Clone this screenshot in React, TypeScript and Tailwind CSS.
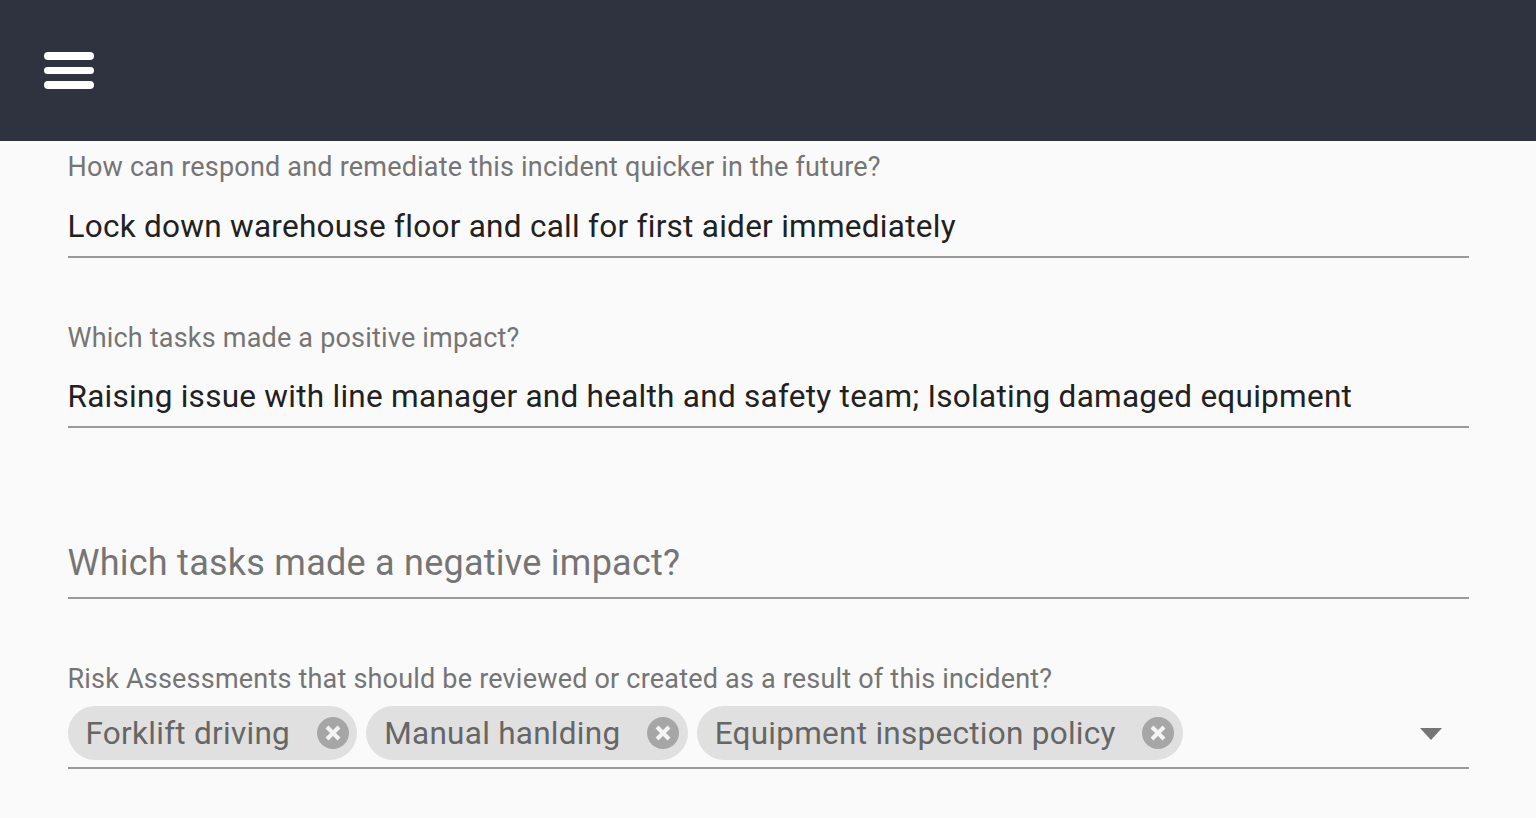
import React from "react";

function TextField({ label, value, first }: { label: string; value: string; first?: boolean }) {
  return (
    <div className={`flex flex-col justify-end border-b-2 border-[#9a9a9a] ${first ? "h-[116.5px]" : "h-[170.5px]"}`}>
      <div className="text-[27px] leading-[34px] text-[#757575] tracking-[0.2px]">{label}</div>
      <div className="pt-[12.5px] h-[71.5px] text-[31.5px] leading-[60px] text-[#212121] tracking-[0.27px]">{value}</div>
    </div>
  );
}

function Chip({ text }: { text: string }) {
  return (
    <div className="flex items-center h-[54px] rounded-full bg-[#e0e0e0] pl-[18px] pr-[8.5px]">
      <span className="text-[31.5px] leading-[54px] mt-[2px] text-[#666666] tracking-[0.27px] mr-[26.75px]">{text}</span>
      <svg viewBox="0 0 32 32" className="w-[32px] h-[32px]">
        <circle cx="16" cy="16" r="16" fill="#a6a6a6" />
        <path d="M10 10L22 22M22 10L10 22" stroke="#f4f4f4" strokeWidth="4" fill="none" />
      </svg>
    </div>
  );
}

export default function App() {
  return (
    <div className="font-['Roboto',sans-serif] w-[1536px] h-[818px] overflow-hidden bg-[#fafafa]">
      <header className="h-[141px] bg-[#2f333f] flex items-center pl-[44px]">
        <div className="flex flex-col gap-[7px]">
          <div className="w-[50px] h-[7.5px] rounded-full bg-white" />
          <div className="w-[50px] h-[7.5px] rounded-full bg-white" />
          <div className="w-[50px] h-[7.5px] rounded-full bg-white" />
        </div>
      </header>
      <main className="pl-[67.5px] pr-[67.5px]">
        <TextField first label="How can respond and remediate this incident quicker in the future?" value="Lock down warehouse floor and call for first aider immediately" />
        <TextField label="Which tasks made a positive impact?" value="Raising issue with line manager and health and safety team; Isolating damaged equipment" />
        <div className="flex flex-col justify-end h-[170.5px] border-b-2 border-[#9a9a9a]">
          <div className="h-[67px] text-[36px] leading-[67px] text-[#757575] tracking-[0.25px]">Which tasks made a negative impact?</div>
        </div>
        <div className="flex flex-col justify-end h-[170.5px] border-b-2 border-[#9a9a9a] pb-[7px]">
          <div className="text-[27px] leading-[34px] text-[#757575] tracking-[0.2px] mb-[10.5px]">Risk Assessments that should be reviewed or created as a result of this incident?</div>
          <div className="flex items-center justify-between pr-[26.5px]">
            <div className="flex items-center gap-[9px]">
              <Chip text="Forklift driving" />
              <Chip text="Manual hanlding" />
              <Chip text="Equipment inspection policy" />
            </div>
            <svg viewBox="0 0 22 12" className="w-[22px] h-[12px] mt-[2px]" fill="#757575">
              <path d="M0 0h22L11 12z" />
            </svg>
          </div>
        </div>
      </main>
    </div>
  );
}
